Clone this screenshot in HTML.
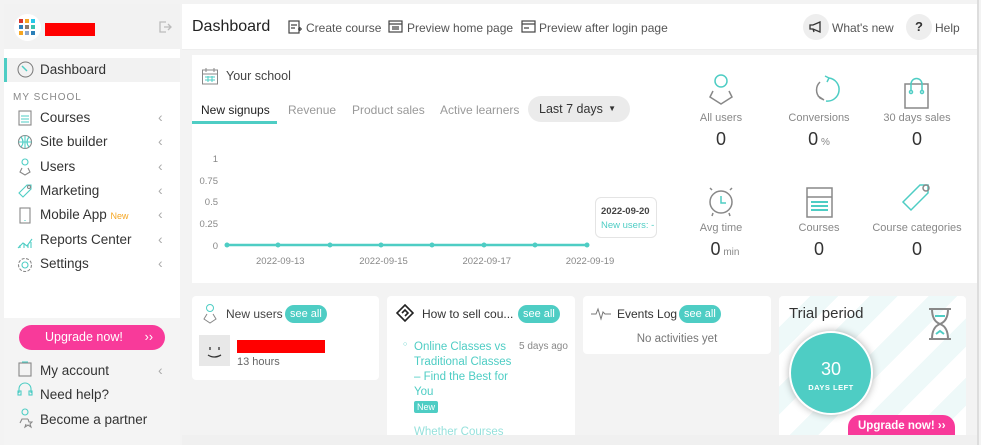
<!DOCTYPE html>
<html><head><meta charset="utf-8"><style>
*{box-sizing:border-box;margin:0;padding:0}
body{width:981px;height:445px;overflow:hidden;background:#f3f3f3;font-family:"Liberation Sans",sans-serif;position:relative;color:#444}
.a{position:absolute}
.side{left:4px;top:4px;width:176px;height:441px;background:#fff}
.nav{font-size:13.5px;color:#333}
.chev{color:#aaa;font-size:14px;left:158px}
.g{color:#888}
.teal{color:#4ecdc4}
.pill{background:#4ecdc4;color:#fff;border-radius:10px;font-size:11px;padding:2px 5px;line-height:14px}
.card{background:#fff;border-radius:4px}
svg{position:absolute}
</style></head><body>
<div class="a side"></div>
<div class="a" style="left:4px;top:4px;width:176px;height:45px;background:#f2f2f2"></div>
<div class="a" style="left:14px;top:14px;width:27px;height:27px;border-radius:50%;background:#fff"></div>
<svg style="left:19px;top:19px" width="17" height="17"><rect x="0" y="0" width="4" height="4" fill="#d9352b"/><rect x="6" y="0" width="4" height="4" fill="#f5a623"/><rect x="12" y="0" width="4" height="4" fill="#27c7e8"/><rect x="0" y="6" width="4" height="4" fill="#2b7fb8"/><rect x="6" y="6" width="4" height="4" fill="#8b7a6b"/><rect x="12" y="6" width="4" height="4" fill="#39c3b0"/><rect x="0" y="12" width="4" height="4" fill="#f5a623"/><rect x="6" y="12" width="4" height="4" fill="#8fa9cf"/><rect x="12" y="12" width="4" height="4" fill="#2b7fb8"/></svg>
<div class="a" style="left:45px;top:23px;width:50px;height:13px;background:#f00"></div>
<svg style="left:158px;top:20px" width="14" height="14"><path d="M8 2H2v10h6M6 7h7M10 4l3 3-3 3" stroke="#bbb" fill="none" stroke-width="1.3"/></svg>
<div class="a" style="left:4px;top:58px;width:176px;height:24px;background:#f2f2f2"></div>
<div class="a" style="left:4px;top:58px;width:3px;height:24px;background:#4ecdc4"></div>
<svg style="left:17px;top:61px" width="17" height="17"><circle cx="8.5" cy="8.5" r="7.5" stroke="#777" fill="none"/><path d="M5 5l5 5" stroke="#4ecdc4" stroke-width="1.5"/></svg>
<div class="a nav" style="left:40px;top:62px">Dashboard</div>
<div class="a" style="left:13px;top:92px;font-size:10px;color:#888;letter-spacing:1px">MY SCHOOL</div>
<div class="a nav" style="left:40px;top:110px">Courses</div>
<div class="a nav" style="left:40px;top:134px">Site builder</div>
<div class="a nav" style="left:40px;top:159px">Users</div>
<div class="a nav" style="left:40px;top:183px">Marketing</div>
<div class="a nav" style="left:40px;top:207px">Mobile App <span style="color:#f5a623;font-size:9px">New</span></div>
<div class="a nav" style="left:40px;top:232px">Reports Center</div>
<div class="a nav" style="left:40px;top:256px">Settings</div>
<svg style="left:17px;top:110px" width="16" height="170" fill="none" stroke="#888" stroke-width="1.1">
<rect x="2" y="1" width="12" height="14"/><path d="M4 6h8M4 9h8M4 12h8" stroke="#4ecdc4"/>
<circle cx="8" cy="32" r="6.5"/><path d="M1.5 32h13M8 25.5v13M4 27q4 5 0 10M12 27q-4 5 0 10" stroke="#4ecdc4"/>
<circle cx="8" cy="52" r="3" stroke="#4ecdc4"/><path d="M5 58l-2 4 5 3 5-3-2-4"/>
<path d="M2 83l8-8h4v4l-8 8z" stroke="#4ecdc4"/><circle cx="12" cy="77" r="1.5"/>
<rect x="3" y="98" width="10" height="15"/><path d="M8 110v1" stroke="#4ecdc4"/>
<path d="M1 138l5-5 4 3 5-7M3 138v-3M7 138v-5M11 138v-4M14 138v-6" stroke="#4ecdc4"/>
<circle cx="8" cy="155" r="3" stroke="#4ecdc4"/><circle cx="8" cy="155" r="6.5" stroke-dasharray="3 1.5"/>
</svg>
<div class="a chev" style="top:109px">‹</div><div class="a chev" style="top:133px">‹</div><div class="a chev" style="top:158px">‹</div><div class="a chev" style="top:182px">‹</div><div class="a chev" style="top:206px">‹</div><div class="a chev" style="top:231px">‹</div><div class="a chev" style="top:255px">‹</div>
<div class="a" style="left:4px;top:318px;width:176px;height:127px;background:#f4f4f4"></div>
<div class="a" style="left:19px;top:325px;width:146px;height:25px;border-radius:13px;background:#f83a9a;color:#fff;font-size:12.5px;line-height:25px;padding-left:26px">Upgrade now!<span style="position:absolute;right:12px">››</span></div>
<svg style="left:17px;top:361px" width="16" height="70" fill="none" stroke="#888" stroke-width="1.1"><rect x="2" y="2" width="12" height="13"/><path d="M5 1h6" stroke="#4ecdc4"/><path d="M2 32v-4a6 6 0 0112 0v4" stroke="#4ecdc4"/><rect x="1" y="30" width="3" height="4" stroke="#4ecdc4"/><rect x="12" y="30" width="3" height="4" stroke="#4ecdc4"/><circle cx="8" cy="51" r="3" stroke="#4ecdc4"/><path d="M3 62l2-4h6M11 58l1 3 3 0-2 2 1 3-3-2-3 2 1-3"/></svg>
<div class="a nav" style="left:40px;top:363px">My account</div><div class="a chev" style="top:362px">‹</div>
<div class="a nav" style="left:40px;top:387px">Need help?</div>
<div class="a nav" style="left:40px;top:412px">Become a partner</div>

<div class="a" style="left:182px;top:4px;width:795px;height:46px;background:#fff;border-bottom:1px solid #eee"></div>
<div class="a" style="left:192px;top:18px;font-size:16px;color:#222">Dashboard</div>
<svg style="left:288px;top:20px" width="250" height="14" fill="none" stroke="#444" stroke-width="1.2"><rect x="1" y="1" width="10" height="12"/><path d="M3 5h6M3 8h4M10 9h4M12 7v4"/><rect x="101" y="1" width="13" height="11"/><path d="M101 4h13M104 7h7M104 9h7"/><rect x="234" y="1" width="13" height="11"/><path d="M234 4h13M236 8h5"/></svg>
<div class="a" style="left:306px;top:21px;font-size:12px;color:#555">Create course</div>
<div class="a" style="left:407px;top:21px;font-size:12px;color:#555">Preview home page</div>
<div class="a" style="left:539px;top:21px;font-size:12px;color:#555">Preview after login page</div>
<div class="a" style="left:803px;top:14px;width:26px;height:26px;border-radius:50%;background:#eee"></div>
<svg style="left:809px;top:21px" width="14" height="12" fill="none" stroke="#333" stroke-width="1.3"><path d="M1 4h3l7-3v10l-7-3H1zM4 8l1 3"/></svg>
<div class="a" style="left:832px;top:21px;font-size:12px;color:#555">What's new</div>
<div class="a" style="left:906px;top:14px;width:26px;height:26px;border-radius:50%;background:#eee;font-size:13px;font-weight:bold;text-align:center;line-height:26px;color:#333">?</div>
<div class="a" style="left:935px;top:21px;font-size:12px;color:#555">Help</div>
<div class="a" style="left:977px;top:0;width:2px;height:445px;background:#ddd"></div>

<div class="a card" style="left:192px;top:55px;width:785px;height:228px;border-radius:0"></div>
<svg style="left:201px;top:67px" width="18" height="18" fill="none" stroke="#888"><rect x="1.5" y="3" width="15" height="14"/><path d="M1.5 7h15M5 1v4M13 1v4"/><path d="M4 10h10M4 13h10M7 9v6M11 9v6" stroke="#4ecdc4"/></svg>
<div class="a" style="left:226px;top:69px;font-size:12.5px;color:#444">Your school</div>
<div class="a" style="left:201px;top:103px;font-size:12px;color:#222">New signups</div>
<div class="a" style="left:192px;top:121px;width:85px;height:3px;background:#4ecdc4"></div>
<div class="a" style="left:288px;top:103px;font-size:12px;color:#999">Revenue</div>
<div class="a" style="left:352px;top:103px;font-size:12px;color:#999">Product sales</div>
<div class="a" style="left:440px;top:103px;font-size:12px;color:#999">Active learners</div>
<div class="a" style="left:528px;top:96px;width:102px;height:26px;border-radius:13px;background:#ebebeb;font-size:12.5px;color:#333;line-height:26px;padding-left:11px">Last 7 days<span style="position:absolute;right:14px;font-size:8px">▼</span></div>
<div class="a" style="left:196px;top:149px;width:22px;text-align:right;font-size:9.5px;color:#888;line-height:21.7px">1<br>0.75<br>0.5<br>0.25<br>0</div>
<svg style="left:222px;top:240px" width="370" height="10"><path d="M5 5H365" stroke="#4ecdc4" stroke-width="2.5"/><g fill="#4ecdc4"><circle cx="5" cy="5" r="2.5"/><circle cx="56" cy="5" r="2.5"/><circle cx="108" cy="5" r="2.5"/><circle cx="159" cy="5" r="2.5"/><circle cx="210" cy="5" r="2.5"/><circle cx="262" cy="5" r="2.5"/><circle cx="313" cy="5" r="2.5"/><circle cx="365" cy="5" r="2.5"/></g></svg>
<div class="a" style="left:256px;top:256px;font-size:9.5px;color:#888;word-spacing:52px;white-space:nowrap">2022-09-13 2022-09-15 2022-09-17 2022-09-19</div>
<div class="a" style="left:595px;top:197px;width:62px;height:41px;border:1px solid #e4e4e4;border-radius:6px;background:#fff;padding:7px 5px;font-size:9.5px;line-height:14px;white-space:nowrap;overflow:hidden"><b style="color:#444">2022-09-20</b><br><span class="teal">New users: -</span></div>

<svg style="left:700px;top:72px" width="270" height="150" fill="none" stroke="#888" stroke-width="1.5">
<circle cx="21" cy="9" r="6" stroke="#4ecdc4"/><path d="M13 19l-3 6 11 7 11-7-3-6"/>
<path d="M120 10a11 11 0 000 16l4 2M118 24l6 4" />
<path d="M129 6a11 11 0 01-3 23M129 6l-4 -2M129 6l-2 4" stroke="#4ecdc4"/>
<path d="M205 12h23v24h-23z"/><path d="M211 18v-6a5.5 5.5 0 0111 0v6" stroke="#4ecdc4"/><circle cx="211" cy="20" r="1.5" stroke="#4ecdc4"/><circle cx="222" cy="20" r="1.5" stroke="#4ecdc4"/>
<circle cx="21" cy="130" r="11"/><path d="M21 124v7h5" stroke="#4ecdc4"/><path d="M12 118l-2-2M30 118l2-2M13 141l-1 3M29 141l1 3"/>
<rect x="107" y="116" width="25" height="29"/><path d="M107 125h25"/><path d="M111 130h17M111 134h17M111 138h17" stroke="#4ecdc4" stroke-width="2"/>
<path d="M203 130l17-17h8v8l-17 17z" stroke="#4ecdc4"/><circle cx="226" cy="116" r="3"/>
</svg>
<div class="a" style="left:660px;top:112px;width:122px;text-align:center;font-size:11px;color:#888">All users</div>
<div class="a" style="left:758px;top:112px;width:122px;text-align:center;font-size:11px;color:#888">Conversions</div>
<div class="a" style="left:856px;top:112px;width:122px;text-align:center;font-size:11px;color:#888">30 days sales</div>
<div class="a" style="left:660px;top:129px;width:122px;text-align:center;font-size:18px;color:#333">0</div>
<div class="a" style="left:758px;top:129px;width:122px;text-align:center;font-size:18px;color:#333">0<span style="font-size:10px;color:#888"> %</span></div>
<div class="a" style="left:856px;top:129px;width:122px;text-align:center;font-size:18px;color:#333">0</div>
<div class="a" style="left:660px;top:222px;width:122px;text-align:center;font-size:11px;color:#888">Avg time</div>
<div class="a" style="left:758px;top:222px;width:122px;text-align:center;font-size:11px;color:#888">Courses</div>
<div class="a" style="left:856px;top:222px;width:122px;text-align:center;font-size:11px;color:#888">Course categories</div>
<div class="a" style="left:664px;top:239px;width:122px;text-align:center;font-size:18px;color:#333">0<span style="font-size:10px;color:#888"> min</span></div>
<div class="a" style="left:758px;top:239px;width:122px;text-align:center;font-size:18px;color:#333">0</div>
<div class="a" style="left:856px;top:239px;width:122px;text-align:center;font-size:18px;color:#333">0</div>

<div class="a card" style="left:192px;top:296px;width:187px;height:84px"></div>
<svg style="left:202px;top:303px" width="16" height="22" fill="none" stroke="#888"><circle cx="8" cy="5" r="3.5" stroke="#4ecdc4"/><path d="M5 11l-3 5 6 4 6-4-3-5"/></svg>
<div class="a" style="left:226px;top:307px;font-size:12px;color:#444">New users</div>
<div class="a pill" style="left:285px;top:305px">see all</div>
<div class="a" style="left:199px;top:335px;width:31px;height:31px;background:#e8e8e8"></div>
<svg style="left:199px;top:335px" width="31" height="31" fill="none" stroke="#333" stroke-width="1.3"><path d="M11 12v3M20 12v3M9 20q6 4 13 0"/></svg>
<div class="a" style="left:237px;top:340px;width:88px;height:13px;background:#f00"></div>
<div class="a" style="left:237px;top:356px;font-size:11px;color:#666">13 hours</div>

<div class="a card" style="left:387px;top:296px;width:188px;height:149px"></div>
<svg style="left:396px;top:304px" width="18" height="18" fill="none" stroke="#222" stroke-width="1.6"><path d="M9 1l8 8-8 8-8-8z"/><path d="M6 9l3-3 3 3-3 3" /></svg>
<div class="a" style="left:422px;top:307px;font-size:12px;color:#333">How to sell cou...</div>
<div class="a pill" style="left:518px;top:305px">see all</div>
<div class="a teal" style="left:403px;top:341px;font-size:7px">○</div>
<div class="a teal" style="left:414px;top:340px;width:100px;font-size:11.5px;line-height:15px">Online Classes vs Traditional Classes – Find the Best for You</div>
<div class="a" style="left:519px;top:341px;font-size:10px;color:#888">5 days ago</div>
<div class="a" style="left:414px;top:401px;background:#4ecdc4;color:#fff;font-size:9px;padding:1px 3px;border-radius:2px">New</div>
<div class="a teal" style="left:414px;top:426px;font-size:11.5px;opacity:.6">Whether Courses</div>

<div class="a card" style="left:583px;top:296px;width:188px;height:58px"></div>
<svg style="left:591px;top:307px" width="22" height="14" fill="none" stroke="#777"><path d="M0 7h5l2-5 3 10 2-7 2 2h6"/></svg>
<div class="a" style="left:617px;top:307px;font-size:12px;color:#333">Events Log</div>
<div class="a pill" style="left:679px;top:305px">see all</div>
<div class="a" style="left:583px;top:333px;width:188px;text-align:center;font-size:11.5px;color:#777">No activities yet</div>

<div class="a card" style="left:779px;top:296px;width:187px;height:149px;background:repeating-linear-gradient(135deg,#fff 0 22px,#eef9f9 22px 42px)"></div>
<div class="a" style="left:789px;top:305px;font-size:15px;color:#333">Trial period</div>
<svg style="left:927px;top:307px" width="26" height="34" fill="none" stroke="#888" stroke-width="2"><path d="M2 2h22M2 32h22M5 2q0 12 8 15q8 3 8 15M21 2q0 12-8 15q-8 3-8 15"/><path d="M8 9h10M9 27l4-3 4 3" stroke="#4ecdc4"/></svg>
<div class="a" style="left:789px;top:331px;width:84px;height:84px;border-radius:50%;background:#4ecdc4;border:2px solid #fff;box-shadow:0 0 8px rgba(0,0,0,.3);color:#fff;text-align:center"><div style="font-size:18px;margin-top:26px">30</div><div style="font-size:7.5px;font-weight:bold;letter-spacing:.5px;margin-top:3px">DAYS LEFT</div></div>
<div class="a" style="left:848px;top:415px;width:107px;height:30px;border-radius:12px 12px 0 0;background:#f83a9a;color:#fff;font-size:11.5px;font-weight:bold;padding:5px 0 0 10px">Upgrade now! ››</div>
<div class="a" style="left:182px;top:435px;width:795px;height:10px;background:#f0f0f0"></div>
</body></html>
